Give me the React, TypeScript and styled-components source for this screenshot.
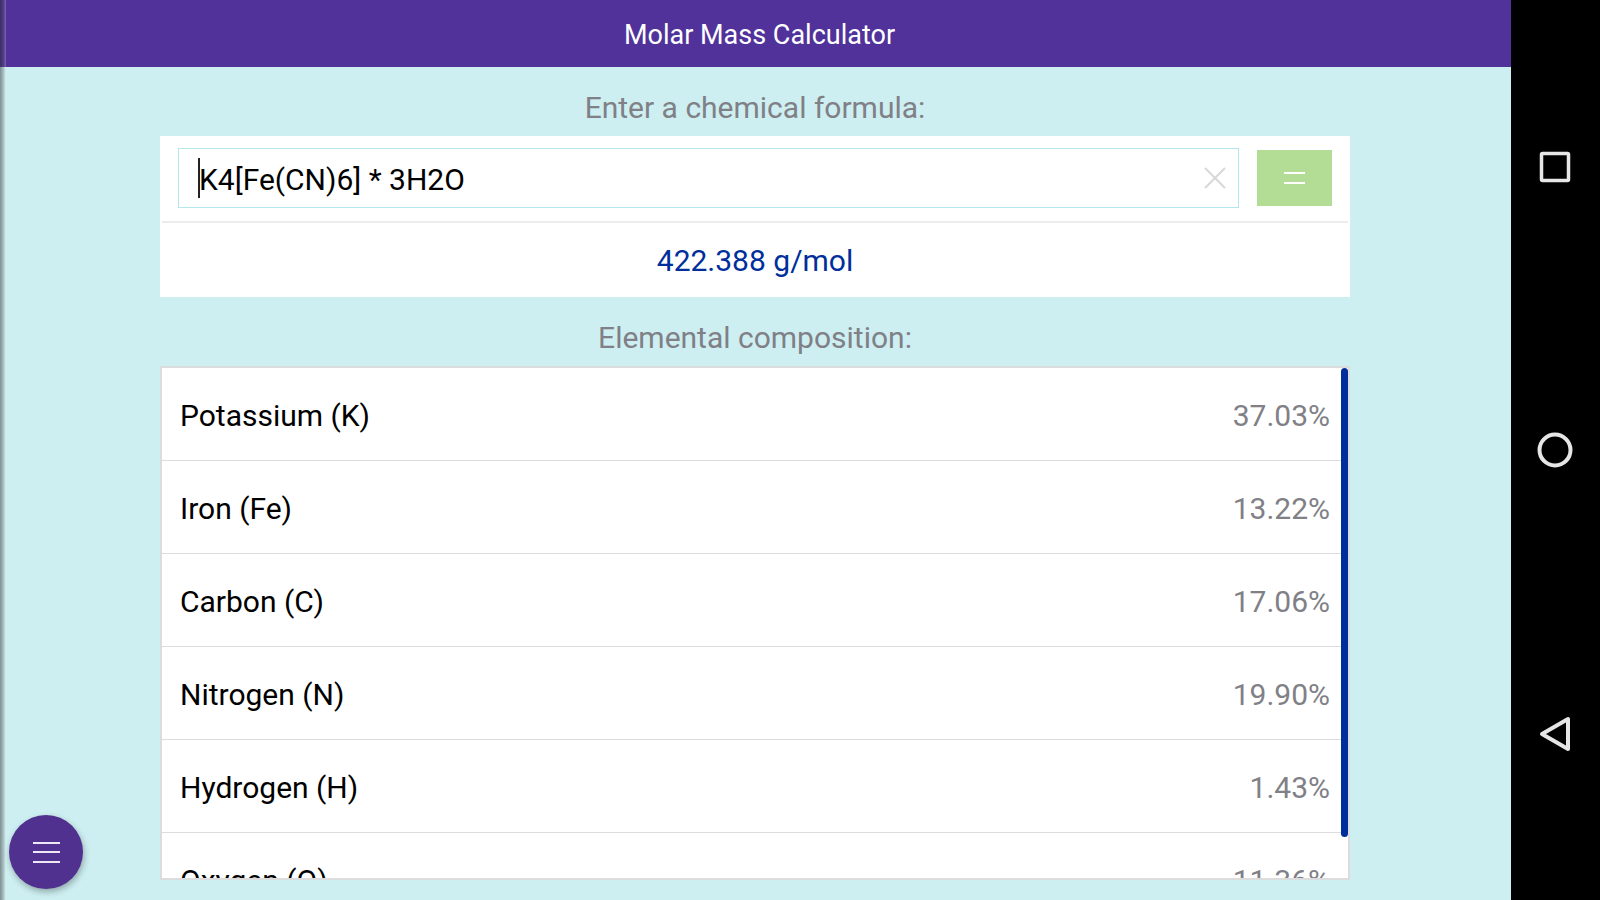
import React, { useState } from "react";
import styled, { createGlobalStyle, css } from "styled-components";

const colors = {
  purple: "#50329a",
  page: "#cdeff1",
  navy: "#002f9c",
  grey: "#808086",
  green: "#b3dc95",
  line: "#dcdcdc",
};

const GlobalStyle = createGlobalStyle`
  * { box-sizing: border-box; }
  body {
    margin: 0;
    background: #000;
    font-family: Roboto, "Liberation Sans", sans-serif;
    font-size: 30px;
    line-height: 36px;
  }
  button { border: 0; padding: 0; background: none; cursor: pointer; }
`;

const Device = styled.div`
  display: grid;
  grid-template-columns: minmax(0, 1fr) 89px;
  height: 100vh;
`;

const Screen = styled.div`
  position: relative;
  display: flex;
  flex-direction: column;
  min-height: 0;
  background: ${colors.page};
`;

const EdgeShadow = styled.div`
  position: absolute;
  inset: 0 auto 0 0;
  width: 6px;
  background: linear-gradient(90deg, rgba(40, 40, 40, 0.48), rgba(90, 90, 90, 0.3) 60%, rgba(255, 255, 255, 0.25));
  pointer-events: none;
`;

const Header = styled.header`
  display: flex;
  align-items: center;
  justify-content: center;
  flex: none;
  height: 67px;
  padding: 2px 0 0 8px;
  background: ${colors.purple};
`;

const Title = styled.h1`
  margin: 0;
  color: #fff;
  font-size: 27px;
  font-weight: 400;
`;

const Content = styled.main`
  display: flex;
  flex: 1;
  flex-direction: column;
  min-height: 0;
  padding: 0 161px 20px 160px;
`;

const captionStyle = css`
  display: block;
  flex: none;
  margin: 0;
  padding: 23px 0 10px;
  color: ${colors.grey};
  font-size: 30px;
  font-weight: 400;
  text-align: center;
`;

const FieldLabel = styled.label`
  ${captionStyle}
`;

const SectionHeading = styled.h2`
  ${captionStyle}
`;

const Card = styled.section`
  flex: none;
  background: #fff;
`;

const EntryRow = styled.form`
  display: flex;
  align-items: center;
  gap: 18px;
  margin: 0 2px;
  padding: 12px 16px 13px;
  border-bottom: 2px solid #ececec;
`;

const Field = styled.div`
  position: relative;
  display: flex;
  flex: 1;
  align-items: center;
  height: 60px;
  padding-right: 11px;
  border: 1px solid #b4e7eb;
`;

const FormulaInput = styled.input`
  flex: 1;
  min-width: 0;
  height: 56px;
  padding: 2px 0 0 20px;
  border: 0;
  outline: 0;
  background: none;
  color: #000;
  font: inherit;
`;

const Caret = styled.span`
  position: absolute;
  top: 9px;
  left: 19px;
  width: 2px;
  height: 40px;
  background: #222;
`;

const ClearButton = styled.button`
  display: flex;
`;

const EqualsButton = styled.button`
  display: flex;
  align-items: center;
  justify-content: center;
  width: 75px;
  height: 56px;
  background: ${colors.green};
`;

const Result = styled.output`
  display: block;
  padding: 20px 0 18px;
  color: ${colors.navy};
  text-align: center;
`;

const ListFrame = styled.section`
  position: relative;
  flex: 1;
  min-height: 0;
  border: 2px solid ${colors.line};
  background: #fff;
`;

const Scroller = styled.div`
  height: 100%;
  overflow-y: auto;
  scrollbar-width: none;
`;

const ScrollThumb = styled.div`
  position: absolute;
  top: 0;
  right: 0;
  width: 7px;
  height: 92%;
  border-radius: 4px;
  background: ${colors.navy};
`;

const Composition = styled.table`
  width: 100%;
  border-collapse: separate;
  border-spacing: 0;
`;

const ElementName = styled.th`
  height: 93px;
  padding: 4px 0 0 18px;
  border-bottom: 1px solid ${colors.line};
  color: #000;
  font-weight: 400;
  text-align: left;
`;

const Share = styled.td`
  height: 93px;
  padding: 4px 18px 0 0;
  border-bottom: 1px solid ${colors.line};
  color: ${colors.grey};
  text-align: right;
`;

const MenuButton = styled.button`
  position: absolute;
  bottom: 11px;
  left: 9px;
  display: flex;
  align-items: center;
  justify-content: center;
  width: 74px;
  height: 74px;
  border-radius: 50%;
  background: #51318f;
  box-shadow: 1px 3px 6px rgba(0, 0, 0, 0.3);
`;

const SystemBar = styled.nav`
  display: flex;
  flex-direction: column;
  align-items: center;
  justify-content: space-around;
  padding: 25px 2px 24px 0;
  background: #000;
`;

const SystemButton = styled.button`
  display: flex;
`;

const elements = [
  ["Potassium (K)", "37.03%"],
  ["Iron (Fe)", "13.22%"],
  ["Carbon (C)", "17.06%"],
  ["Nitrogen (N)", "19.90%"],
  ["Hydrogen (H)", "1.43%"],
  ["Oxygen (O)", "11.36%"],
];

export default function App() {
  const [formula, setFormula] = useState("K4[Fe(CN)6] * 3H2O");

  return (
    <Device>
      <GlobalStyle />
      <Screen>
        <Header>
          <Title>Molar Mass Calculator</Title>
        </Header>
        <Content>
          <FieldLabel htmlFor="formula">Enter a chemical formula:</FieldLabel>
          <Card>
            <EntryRow onSubmit={(e) => e.preventDefault()}>
              <Field>
                <FormulaInput
                  id="formula"
                  type="text"
                  value={formula}
                  onChange={(e) => setFormula(e.target.value)}
                />
                <Caret />
                <ClearButton type="button" aria-label="Clear" onClick={() => setFormula("")}>
                  <svg width="24" height="24" viewBox="0 0 24 24" stroke="#d8d8d8" strokeWidth="2">
                    <path d="M2 2 22 22M22 2 2 22" />
                  </svg>
                </ClearButton>
              </Field>
              <EqualsButton type="submit" aria-label="Calculate">
                <svg width="21" height="12" viewBox="0 0 21 12" fill="#fff">
                  <path d="M0 0h21v2H0zM0 10h21v2H0z" />
                </svg>
              </EqualsButton>
            </EntryRow>
            <Result htmlFor="formula">422.388 g/mol</Result>
          </Card>
          <SectionHeading id="composition">Elemental composition:</SectionHeading>
          <ListFrame>
            <Scroller>
              <Composition aria-labelledby="composition">
                <tbody>
                  {elements.map(([name, share]) => (
                    <tr key={name}>
                      <ElementName scope="row">{name}</ElementName>
                      <Share>{share}</Share>
                    </tr>
                  ))}
                </tbody>
              </Composition>
            </Scroller>
            <ScrollThumb />
          </ListFrame>
        </Content>
        <EdgeShadow />
        <MenuButton type="button" aria-label="Menu">
          <svg width="27" height="22" viewBox="0 0 27 22" fill="#eee8f6">
            <path d="M0 1h27v2H0zM0 10h27v2H0zM0 20h27v2H0z" />
          </svg>
        </MenuButton>
      </Screen>
      <SystemBar aria-label="System">
        <SystemButton type="button" aria-label="Recent apps">
          <svg width="36" height="36" viewBox="0 0 36 36" fill="none" stroke="#e6e6e6" strokeWidth="3.5">
            <rect x="4.5" y="4.5" width="27" height="27" rx="1" />
          </svg>
        </SystemButton>
        <SystemButton type="button" aria-label="Home">
          <svg width="36" height="36" viewBox="0 0 36 36" fill="none" stroke="#e6e6e6" strokeWidth="4">
            <circle cx="18" cy="18" r="15.5" />
          </svg>
        </SystemButton>
        <SystemButton type="button" aria-label="Back">
          <svg
            width="36"
            height="36"
            viewBox="0 0 36 36"
            fill="none"
            stroke="#e6e6e6"
            strokeWidth="4"
            strokeLinejoin="round"
          >
            <path d="M31 3v30L5 18z" />
          </svg>
        </SystemButton>
      </SystemBar>
    </Device>
  );
}
